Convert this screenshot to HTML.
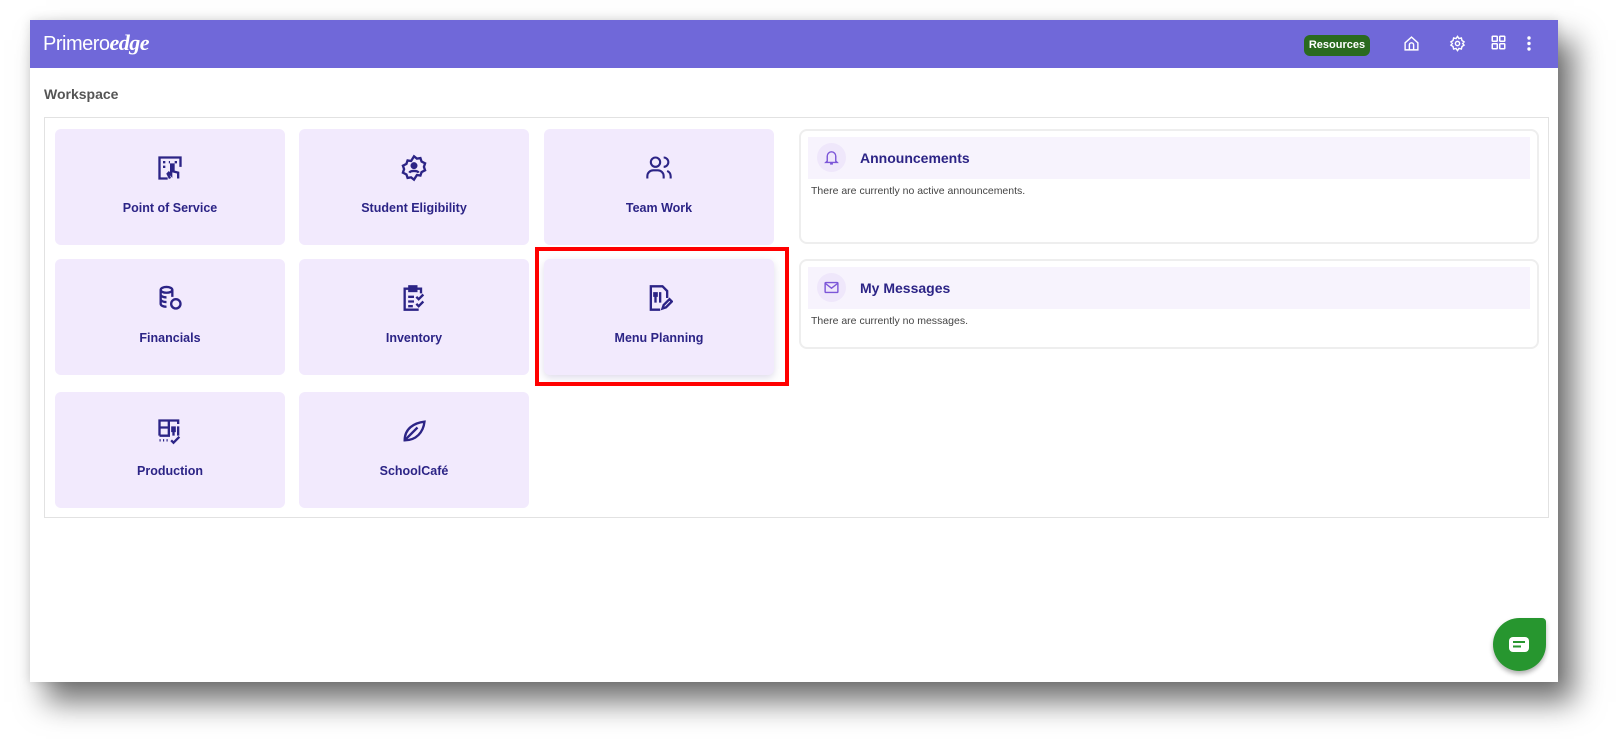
<!DOCTYPE html>
<html><head><meta charset="utf-8"><style>
*{box-sizing:border-box;margin:0;padding:0}
body{width:1616px;height:739px;background:#fff;font-family:"Liberation Sans",sans-serif;position:relative;overflow:hidden}
.win{position:absolute;left:30px;top:20px;width:1528px;height:662px;background:#fff;box-shadow:16px 20px 28px rgba(0,0,0,.55),0 0 10px rgba(0,0,0,.12)}
.hdr{position:absolute;left:0;top:0;width:100%;height:48px;background:#7068d9}
.logo{position:absolute;left:13px;top:10px;color:#fff;font-size:20px;letter-spacing:-0.5px}
.logo i{font-family:"Liberation Serif",serif;font-weight:bold;font-size:22px}
.res{position:absolute;left:1274px;top:15px;width:66px;height:21px;background:#2a6a1e;border-radius:6px;color:#fff;font-size:11px;font-weight:bold;text-align:center;line-height:21px}
.hi{position:absolute;top:15px}
.ws{position:absolute;left:14px;top:66px;font-size:14px;font-weight:bold;color:#555}
.panel{position:absolute;left:14px;top:97px;width:1505px;height:401px;border:1px solid #e2e2e2}
.tile{position:absolute;width:230px;height:116px;background:#f2eafd;border-radius:6px;text-align:center;color:#2c2486;font-weight:bold;font-size:12.5px}
.tile svg{position:absolute;left:101px;top:25px}
.tile span{position:absolute;left:0;right:0;top:72px}
.card{position:absolute;left:769px;width:740px;background:#fff;border:2px solid #eee;border-radius:8px}
.band{position:absolute;left:7px;right:7px;top:6px;height:42px;background:#f7f3fd}
.circ{position:absolute;left:9px;top:6px;width:29px;height:29px;border-radius:50%;background:#efe7fb}
.circ svg{position:absolute;left:6px;top:6px}
.ct{position:absolute;left:52px;top:13px;font-size:14px;font-weight:bold;color:#2c2486}
.cx{position:absolute;left:10px;top:54px;font-size:10.5px;color:#444}
.red{position:absolute;left:505px;top:227px;width:254px;height:139px;border:4px solid #f00}
.chat{position:absolute;left:1463px;top:598px;width:53px;height:53px;background:#27962f;border-radius:27px 4px 27px 27px;box-shadow:0 3px 5px rgba(0,0,0,.3)}
</style></head><body>
<div class="win">
 <div class="hdr">
  <div class="logo">Primero<i>edge</i></div>
  <div class="res">Resources</div>
  <svg class="hi" style="left:1373px" width="17" height="17" viewBox="0 0 24 24" fill="none" stroke="#fff" stroke-width="2"><path d="M3 11L12 3l9 8v10H3z"/><path d="M9 21v-7a3 3 0 016 0v7"/></svg>
  <svg class="hi" style="left:1419px" width="17" height="17" viewBox="0 0 24 24" fill="none" stroke="#fff" stroke-width="2"><circle cx="12" cy="12" r="3"/><path d="M12 2l2 3 3.5-.8.8 3.5 3 2-2 2.3 2 2.3-3 2-.8 3.5L14 19l-2 3-2-3-3.5.8-.8-3.5-3-2 2-2.3-2-2.3 3-2 .8-3.5L10 5z"/></svg>
  <svg class="hi" style="left:1461px" width="15" height="15" viewBox="0 0 24 24" fill="none" stroke="#fff" stroke-width="2.4"><rect x="2" y="2" width="8" height="8" rx="1"/><rect x="14" y="2" width="8" height="8" rx="1"/><rect x="2" y="14" width="8" height="8" rx="1"/><rect x="14" y="14" width="8" height="8" rx="1"/></svg>
  <svg class="hi" style="left:1496px" width="6" height="17" viewBox="0 0 6 17" fill="#fff"><circle cx="3" cy="3" r="1.7"/><circle cx="3" cy="8.5" r="1.7"/><circle cx="3" cy="14" r="1.7"/></svg>
 </div>
 <div class="ws">Workspace</div>
 <div class="panel">
  <div class="tile" style="left:10px;top:11px"><svg width="28" height="28" viewBox="0 0 24 24" fill="none" stroke="#2c2486" stroke-width="2"><path d="M10 21H3V3h18v8"/><path d="M6 7h2M6 11h2M11 7h1M16 7h2"/><path d="M12 21l-2-4 1-1 2 2V9h2v6l4 1v5"/></svg><span>Point of Service</span></div>
  <div class="tile" style="left:254px;top:11px"><svg width="28" height="28" viewBox="0 0 24 24" fill="none" stroke="#2c2486" stroke-width="2"><path d="M12 2l2.5 2 3-.5 1 3 3 1.5-1 3 1 3-3 1.5-1 3-3-.5L12 22l-2.5-2-3 .5-1-3-3-1.5 1-3-1-3 3-1.5 1-3 3 .5z"/><circle cx="12" cy="10" r="2" fill="#2c2486"/><path d="M8 16c1-2 7-2 8 0"/></svg><span>Student Eligibility</span></div>
  <div class="tile" style="left:499px;top:11px"><svg width="28" height="28" viewBox="0 0 24 24" fill="none" stroke="#2c2486" stroke-width="1.8"><circle cx="9" cy="7" r="4"/><path d="M2 21v-2a5 5 0 015-5h4a5 5 0 015 5v2M16 3a4 4 0 010 8M22 21v-2a5 5 0 00-3-4.5"/></svg><span>Team Work</span></div>
  <div class="tile" style="left:10px;top:141px"><svg width="28" height="28" viewBox="0 0 24 24" fill="none" stroke="#2c2486" stroke-width="2"><ellipse cx="9" cy="5" rx="5" ry="2.5"/><path d="M4 5v12c0 1.4 2.2 2.5 5 2.5M4 9c0 1.4 2.2 2.5 5 2.5M4 13c0 1.4 2.2 2.5 5 2.5M14 5v6"/><circle cx="17" cy="17" r="4"/></svg><span>Financials</span></div>
  <div class="tile" style="left:254px;top:141px"><svg width="28" height="28" viewBox="0 0 24 24" fill="none" stroke="#2c2486" stroke-width="2"><path d="M8 4H4v18h12"/><rect x="8" y="2" width="6" height="4" fill="#2c2486"/><path d="M14 4h4v4M7 11h5M7 15h5M7 19h4M14 11l2 2 4-4M14 17l2 2 4-4"/></svg><span>Inventory</span></div>
  <div class="tile" style="left:499px;top:141px;box-shadow:0 3px 8px rgba(80,60,140,.18)"><svg width="28" height="28" viewBox="0 0 24 24" fill="none" stroke="#2c2486" stroke-width="2"><path d="M13 22H5V2h10l4 4v6"/><path d="M8 7v4M10 7v4M8 10h2M9 10v6M13 7v9"/><path d="M15 21l1-3 5-5 2 2-5 5z"/></svg><span>Menu Planning</span></div>
  <div class="tile" style="left:10px;top:274px"><svg width="28" height="28" viewBox="0 0 24 24" fill="none" stroke="#2c2486" stroke-width="2"><path d="M3 16V3h16v3M3 9h8M11 3v13H3"/><path d="M14 8v5M16 8v5M14 11h2M15 11v5M19 8v8"/><path d="M3 20h1M6 20h1M9 20h1M13 20l2 2 5-5"/></svg><span>Production</span></div>
  <div class="tile" style="left:254px;top:274px"><svg width="28" height="28" viewBox="0 0 24 24" fill="none" stroke="#2c2486" stroke-width="2"><path d="M4 20C4 10 12 5 21 4c-1 9-7 16-17 16z"/><path d="M4 20L15 9"/></svg><span>SchoolCafé</span></div>
 </div>
 <div class="red"></div>
 <div class="card" style="top:109px;height:115px"><div class="band"><div class="circ"><svg width="17" height="17" viewBox="0 0 24 24" fill="none" stroke="#7c56d8" stroke-width="2"><path d="M6 17V10a6 6 0 0112 0v7l2 2H4zM10 21h4"/></svg></div><div class="ct">Announcements</div></div><div class="cx">There are currently no active announcements.</div></div>
 <div class="card" style="top:239px;height:90px"><div class="band"><div class="circ"><svg width="17" height="17" viewBox="0 0 24 24" fill="none" stroke="#7c56d8" stroke-width="2"><rect x="3" y="5" width="18" height="14" rx="1"/><path d="M3 6l9 7 9-7"/></svg></div><div class="ct">My Messages</div></div><div class="cx">There are currently no messages.</div></div>
 <div class="chat"><svg style="position:absolute;left:16px;top:19px" width="20" height="15" viewBox="0 0 20 15"><rect x="0" y="0" width="20" height="15" rx="4" fill="#fff"/><rect x="4" y="4" width="12" height="2" fill="#27962f"/><rect x="4" y="8.5" width="8" height="2" fill="#27962f"/></svg></div>
</div>
</body></html>
